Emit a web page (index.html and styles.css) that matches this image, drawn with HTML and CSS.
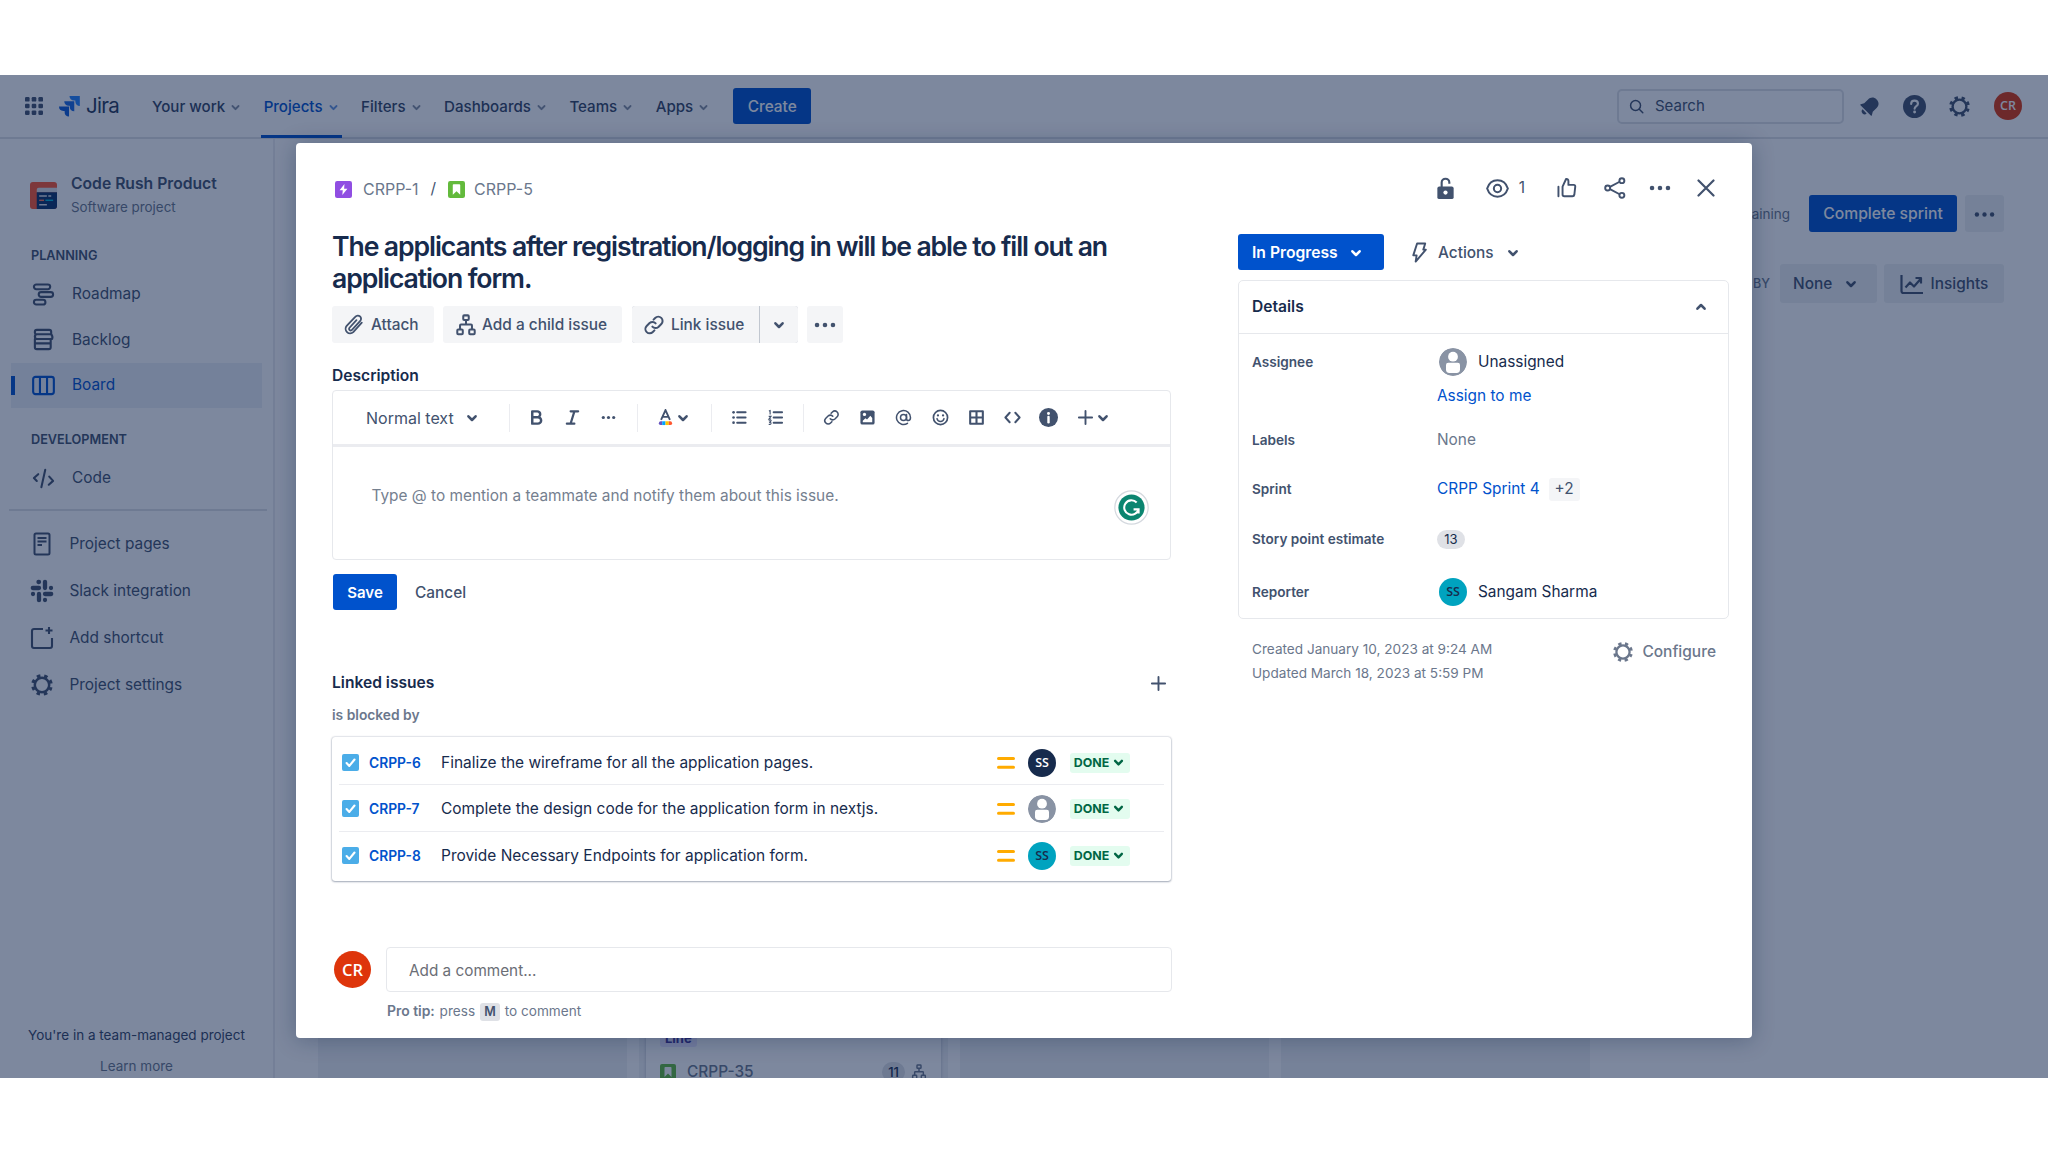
FILE: index.html
```
<!DOCTYPE html>
<html lang="en">
<head>
    <meta charset="UTF-8">
    <meta name="viewport" content="width=device-width, initial-scale=1.0">
    <title>CRPP-5 - Jira</title>
    <link rel="stylesheet" href="styles.css">
</head>
<body>
    <!-- Icon sprite -->
    <svg class="sprite" xmlns="http://www.w3.org/2000/svg">
        <symbol id="chevron" viewBox="0 0 12 12"><path d="M3.300 4.700 6 7.500l2.700-2.800" fill="none" stroke="currentColor" stroke-width="1.900" stroke-linecap="round" stroke-linejoin="round"/></symbol>
        <symbol id="gear" viewBox="0 0 24 24"><g fill="none" stroke="currentColor"><circle cx="12" cy="12" r="7.200" stroke-width="2.500"/><circle cx="12" cy="12" r="9.300" stroke-width="3" stroke-dasharray="3.600 3.704" stroke-dashoffset="1.800" transform="rotate(22.500 12 12)"/></g></symbol>
        <symbol id="more" viewBox="0 0 24 24"><g fill="currentColor"><circle cx="3.300" cy="12" r="2.500"/><circle cx="12" cy="12" r="2.500"/><circle cx="20.700" cy="12" r="2.500"/></g></symbol>
        <symbol id="link" viewBox="0 0 24 24"><g fill="none" stroke="currentColor" stroke-width="2.200" stroke-linecap="round" stroke-linejoin="round"><path d="M10.200 13.800a4.600 4.600 0 0 0 6.600.3l3.200-3.200a4.700 4.700 0 0 0-6.700-6.600l-1.800 1.800"/><path d="M13.800 10.200a4.600 4.600 0 0 0-6.600-.3L4 13.100a4.700 4.700 0 0 0 6.700 6.600l1.800-1.800"/></g></symbol>
        <symbol id="tree" viewBox="0 0 24 24"><g fill="none" stroke="currentColor" stroke-width="2.200" stroke-linejoin="round"><rect x="9" y="1.500" width="6" height="5" rx="1"/><rect x="2.500" y="17" width="6" height="5" rx="1"/><rect x="15.500" y="17" width="6" height="5" rx="1"/><path d="M12 6.500v5M5.500 17v-4.500q0-1 1-1h11q1 0 1 1V17"/></g></symbol>
        <symbol id="story" viewBox="0 0 16 16"><rect width="16" height="16" rx="2" fill="#63BA3C"/><path d="M4.500 3.800q0-.8.8-.8h5.400q.8 0 .8.8V13L8 9.600 4.500 13z" fill="#fff"/></symbol>
        <symbol id="task" viewBox="0 0 16 16"><rect width="16" height="16" rx="1.800" fill="#4BADE8"/><path d="M4.300 8.500l2.600 2.700 4.900-6" fill="none" stroke="#fff" stroke-width="2" stroke-linecap="round" stroke-linejoin="round"/></symbol>
        <symbol id="medium" viewBox="0 0 18 16"><path d="M1.500 3.500h15M1.500 12.300h15" stroke="#FFAB00" stroke-width="3" stroke-linecap="round"/></symbol>
        <symbol id="person" viewBox="0 0 28 28"><circle cx="14" cy="14" r="14" fill="#8993A4"/><circle cx="14" cy="8.700" r="4.900" fill="#fff"/><path d="M7 17q0-2.300 2.300-2.300h9.400q2.300 0 2.300 2.300v4.600q0 3.400-3.400 3.400h-7.200Q7 25 7 21.600z" fill="#fff"/></symbol>
        <symbol id="plus" viewBox="0 0 18 18"><path d="M9 2v14M2 9h14" stroke="currentColor" stroke-width="2" stroke-linecap="round"/></symbol>
    </svg>

    <div class="app">
        <header class="topnav">
            <svg class="switcher" viewBox="0 0 18 18"><g fill="currentColor"><rect width="4.600" height="4.600" rx="1.200"/><rect x="6.700" width="4.600" height="4.600" rx="1.200"/><rect x="13.400" width="4.600" height="4.600" rx="1.200"/><rect y="6.700" width="4.600" height="4.600" rx="1.200"/><rect x="6.700" y="6.700" width="4.600" height="4.600" rx="1.200"/><rect x="13.400" y="6.700" width="4.600" height="4.600" rx="1.200"/><rect y="13.400" width="4.600" height="4.600" rx="1.200"/><rect x="6.700" y="13.400" width="4.600" height="4.600" rx="1.200"/><rect x="13.400" y="13.400" width="4.600" height="4.600" rx="1.200"/></g></svg>
            <a class="brand" href="#">
                <svg viewBox="0 0 22 22"><path d="M0 11h10.500v10.500a4.800 4.800 0 0 1-4.600-4.800v-1.100H4.600A4.700 4.700 0 0 1 0 11z" fill="#0E5BD8"/><path d="M5.500 5.500H16V16a4.800 4.800 0 0 1-4.700-4.700v-1.100h-1.200a4.700 4.700 0 0 1-4.600-4.700z" fill="#1868E3"/><path d="M11 0h10.800v10.600a4.800 4.800 0 0 1-4.700-4.800V4.700h-1.400A4.700 4.700 0 0 1 11 0z" fill="#2684FF"/></svg>
                <span>Jira</span>
            </a>
            <nav class="menu">
                <a href="#">Your work<svg><use href="#chevron"/></svg></a>
                <a href="#" class="active">Projects<svg><use href="#chevron"/></svg></a>
                <a href="#">Filters<svg><use href="#chevron"/></svg></a>
                <a href="#">Dashboards<svg><use href="#chevron"/></svg></a>
                <a href="#">Teams<svg><use href="#chevron"/></svg></a>
                <a href="#">Apps<svg><use href="#chevron"/></svg></a>
            </nav>
            <button class="btn primary create">Create</button>
            <div class="search">
                <svg viewBox="0 0 16 16"><g fill="none" stroke="currentColor" stroke-width="1.600" stroke-linecap="round"><circle cx="7" cy="7" r="5.300"/><path d="M11 11l3.700 3.700"/></g></svg>
                <span>Search</span>
            </div>
            <div class="nav-icons">
                <svg viewBox="0 0 24 24"><g transform="rotate(45 12 12)" fill="currentColor"><path d="M12 1.500c4 0 6.300 2.600 6.300 6.300v5.700l1.900 3.200q.5 1-.6 1H4.400q-1.100 0-.6-1l1.900-3.200V7.800C5.700 4.100 8 1.500 12 1.500z"/><path d="M9 19.200h6a3 3 0 0 1-6 0z"/></g></svg>
                <svg viewBox="0 0 24 24"><circle cx="12" cy="12" r="12" fill="currentColor"/><path d="M8.500 9.300c0-2 1.500-3.400 3.500-3.400s3.600 1.300 3.600 3.200c0 2.500-3.500 2.600-3.500 5.300" fill="none" stroke="#fff" stroke-width="2.200" stroke-linecap="round"/><circle cx="12.100" cy="17.800" r="1.500" fill="#fff"/></svg>
                <svg><use href="#gear"/></svg>
                <span class="avatar red">CR</span>
            </div>
        </header>

        <div class="page">
            <aside class="sidebar">
                <div class="project">
                    <svg viewBox="0 0 28 28"><rect width="28" height="28" rx="3" fill="#FF5630"/><path d="M7 8q0-2 2-2h19v5H7z" fill="#DFE1E6"/><path d="M7 10.500h21V25q0 3-3 3H7z" fill="#0B3268"/><path d="M9.500 14.500h8M9.500 23.500h8M19 14.500h3" stroke="#DFE1E6" stroke-width="1.500"/><path d="M9.500 19h5" stroke="#FF7452" stroke-width="1.500"/><path d="M16 19h8" stroke="#00B8D9" stroke-width="1.500"/></svg>
                    <div>
                        <div class="project-name">Code Rush Product</div>
                        <div class="project-type">Software project</div>
                    </div>
                </div>
                <h2>Planning</h2>
                <a href="#" class="item"><svg viewBox="0 0 24 24"><g fill="none" stroke="currentColor" stroke-width="2.200"><rect x="2" y="1.500" width="17" height="5" rx="2.500"/><rect x="7" y="9.500" width="15" height="5" rx="2.500"/><rect x="2" y="17.500" width="12" height="5" rx="2.500"/></g></svg>Roadmap</a>
                <a href="#" class="item"><svg viewBox="0 0 24 24"><g fill="none" stroke="currentColor" stroke-width="2.200" stroke-linejoin="round"><path d="M4 6.500h16V4q0-2-2-2H5Q3 2 3 4v1q0 1.500 1.500 1.500M4 11.500h17q1-3-1-5M4 6.500q-2 2.500 0 5M3 11.500h16.500V16H3zM3 16h16.500v4q0 2-2 2H5q-2 0-2-2z"/></g></svg>Backlog</a>
                <a href="#" class="item active"><svg viewBox="0 0 24 24"><g fill="none" stroke="currentColor" stroke-width="2.200"><rect x="1.200" y="3" width="21.600" height="18" rx="2.500"/><path d="M8.300 3v18M15.700 3v18"/></g></svg>Board</a>
                <h2 class="dev">Development</h2>
                <a href="#" class="item code"><svg viewBox="0 0 24 24"><path d="M6.500 7.500 2 11.500l3 3M13.800 3l-4 18M18 10l4 4.500-4.500 4" fill="none" stroke="currentColor" stroke-width="2.200" stroke-linecap="round" stroke-linejoin="round"/></svg>Code</a>
                <hr>
                <div class="tools">
                    <a href="#"><svg viewBox="0 0 24 24"><g fill="none" stroke="currentColor" stroke-width="2"><rect x="4.500" y="1.500" width="15" height="21" rx="1.500"/><path d="M7.500 6h9M7.500 9.500h9M7.500 13h4.500"/></g></svg>Project pages</a>
                    <a href="#"><svg viewBox="0 0 24 24"><g stroke="currentColor" stroke-width="4.300" stroke-linecap="round"><path d="M9 9H2.800M15 9V2.800M15 15h6.200M9 15v6.200M9 3v.01M8.500 3H9M21 9v.01M15 21v.01M3 15v.01"/></g></svg>Slack integration</a>
                    <a href="#"><svg viewBox="0 0 24 24"><path d="M13 3H4q-2 0-2 2v15q0 2 2 2h16q2 0 2-2v-8M19 1v7M15.500 4.500h7" fill="none" stroke="currentColor" stroke-width="2.100"/></svg>Add shortcut</a>
                    <a href="#"><svg><use href="#gear"/></svg>Project settings</a>
                </div>
                <div class="team-note">You're in a team-managed project<a href="#">Learn more</a></div>
            </aside>

            <main class="board">
                <div class="board-bar">
                    <span class="remaining">0 days remaining</span>
                    <button class="btn primary">Complete sprint</button>
                    <button class="btn subtle dots"><svg><use href="#more"/></svg></button>
                </div>
                <div class="board-filters">
                    <span>GROUP BY</span>
                    <button class="btn subtle none">None<svg class="chev"><use href="#chevron"/></svg></button>
                    <button class="btn subtle insights"><svg viewBox="0 0 24 24"><path d="M1.500 3v16q0 2 2 2H23M5.500 15.500l4.500-5 4 4 7-8M15.500 6H21v5.500" fill="none" stroke="currentColor" stroke-width="2.200" stroke-linejoin="round"/></svg>Insights</button>
                </div>
                <div class="columns">
                    <div class="column"></div>
                    <div class="column">
                        <div class="card">
                            <span class="epic">Line</span>
                            <div class="card-row"><svg class="type"><use href="#story"/></svg><span>CRPP-35</span><b>11</b><svg class="sub"><use href="#tree"/></svg></div>
                        </div>
                    </div>
                    <div class="column"></div>
                    <div class="column"></div>
                </div>
            </main>
        </div>

        <div class="blanket"></div>

        <!-- Issue dialog -->
        <section class="modal">
            <div class="content">
                <div class="crumbs">
                    <svg viewBox="0 0 16 16"><rect width="16" height="16" rx="2" fill="#904EE2"/><path d="M8.900 2.800 4.300 8.600h3L6.900 13.200l4.800-5.900H8.600z" fill="#fff"/></svg>
                    <a href="#">CRPP-1</a>
                    <i>/</i>
                    <svg><use href="#story"/></svg>
                    <a href="#">CRPP-5</a>
                </div>
                <h1>The applicants after registration/logging in will be able to fill out an application form.</h1>
                <div class="quick">
                    <button class="btn attach"><svg viewBox="0 0 24 24"><path d="M20.500 9.500l-9.300 10.300a5 5 0 0 1-7.200-6.900L13.600 2.900a3.500 3.500 0 0 1 5.200 4.700l-9 9.800a1.800 1.800 0 0 1-2.700-2.400l7.600-8.200" fill="none" stroke="currentColor" stroke-width="2" stroke-linecap="round" stroke-linejoin="round"/></svg>Attach</button>
                    <button class="btn child"><svg><use href="#tree"/></svg>Add a child issue</button>
                    <div class="split">
                        <button class="btn"><svg><use href="#link"/></svg>Link issue</button>
                        <button class="btn drop"><svg class="chev"><use href="#chevron"/></svg></button>
                    </div>
                    <button class="btn dots"><svg><use href="#more"/></svg></button>
                </div>

                <h3 class="desc-title">Description</h3>
                <div class="editor">
                    <div class="toolbar">
                        <div class="style">Normal text<svg class="chev"><use href="#chevron"/></svg></div>
                        <div class="group">
                            <span><svg viewBox="0 0 18 18"><path d="M4.500 2.500h5.300a3.100 3.100 0 0 1 0 6.200H4.500zM4.500 8.700h6a3.400 3.400 0 0 1 0 6.800h-6z" fill="none" stroke="currentColor" stroke-width="2.600" stroke-linejoin="round"/></svg></span>
                            <span><svg viewBox="0 0 18 18"><path d="M7 2.500h8M3 15.500h8M11 2.500 7 15.500" fill="none" stroke="currentColor" stroke-width="2.300" stroke-linecap="round"/></svg></span>
                            <span><svg viewBox="0 0 18 18"><g fill="currentColor"><circle cx="3.500" cy="9" r="1.700"/><circle cx="9" cy="9" r="1.700"/><circle cx="14.500" cy="9" r="1.700"/></g></svg></span>
                        </div>
                        <div class="group color">
                            <svg viewBox="0 0 18 18"><path d="M4.300 11.500 9 1.200l4.700 10.300M5.800 8.300h6.400" fill="none" stroke="currentColor" stroke-width="2"/><path d="M2 15a2 2 0 0 1 2-2h1.500v4H4a2 2 0 0 1-2-2z" fill="#6554C0"/><path d="M5.500 13H9v4H5.500z" fill="#00A3FF"/><path d="M9 13h3.500v4H9z" fill="#FFC400"/><path d="M12.500 13H14a2 2 0 0 1 0 4h-1.500z" fill="#FF5630"/></svg>
                            <svg class="chev"><use href="#chevron"/></svg>
                        </div>
                        <div class="group lists">
                            <span><svg viewBox="0 0 18 18"><path d="M6.500 3.500h9M6.500 9h9M6.500 14.500h9" stroke="currentColor" stroke-width="2" stroke-linecap="round"/><g fill="currentColor"><circle cx="2.700" cy="3.500" r="1.400"/><circle cx="2.700" cy="9" r="1.400"/><circle cx="2.700" cy="14.500" r="1.400"/></g></svg></span>
                            <span><svg viewBox="0 0 18 18"><path d="M7 3.500h9M7 9h9M7 14.500h9" stroke="currentColor" stroke-width="2" stroke-linecap="round"/><path d="M2 2.200l1.300-.5v4M1.800 7.800h2.400L2 10.700h2.400M1.800 12.500h2.400l-1.200 1.600q1.500.2 1.200 1.400-.6 1.200-2.400.6" fill="none" stroke="currentColor" stroke-width="1.200"/></svg></span>
                        </div>
                        <div class="group last">
                            <span><svg><use href="#link"/></svg></span>
                            <span><svg viewBox="0 0 18 18"><rect x="1.500" y="1.500" width="15" height="15" rx="2" fill="currentColor"/><circle cx="5.800" cy="5.800" r="1.700" fill="#fff"/><path d="M4 14v-1.500l2.800-2.800 1.700 1.500 3.500-4L14 9.500V14z" fill="#fff"/></svg></span>
                            <span><svg viewBox="0 0 18 18"><g fill="none" stroke="currentColor" stroke-width="1.600" stroke-linecap="round"><circle cx="9" cy="9" r="3.200"/><path d="M12.200 5.800v4.400q0 2 1.900 2 2.300 0 2.300-3.200a7.400 7.400 0 1 0-3.200 6.100"/></g></svg></span>
                            <span><svg viewBox="0 0 18 18"><circle cx="9" cy="9" r="7.500" fill="none" stroke="currentColor" stroke-width="1.800"/><circle cx="6.300" cy="6.800" r="1.200" fill="currentColor"/><circle cx="11.700" cy="6.800" r="1.200" fill="currentColor"/><path d="M5.300 10.200a3.800 3.800 0 0 0 7.400 0" fill="none" stroke="currentColor" stroke-width="1.600" stroke-linecap="round"/></svg></span>
                            <span><svg viewBox="0 0 18 18"><path d="M2.300 2.300h13.400v13.400H2.300zM9 2.300v13.400M2.300 9h13.400" fill="none" stroke="currentColor" stroke-width="2.200" stroke-linejoin="round"/></svg></span>
                            <span><svg viewBox="0 0 18 18"><path d="M6 4 1.500 9 6 14M12 4l4.500 5-4.500 5" fill="none" stroke="currentColor" stroke-width="2.100" stroke-linecap="round" stroke-linejoin="round"/></svg></span>
                            <span><svg class="info" viewBox="0 0 18 18"><circle cx="9" cy="9" r="9" fill="currentColor"/><circle cx="9" cy="5.300" r="1.400" fill="#fff"/><path d="M9 8.500v5" stroke="#fff" stroke-width="2.300" stroke-linecap="round"/></svg></span>
                            <span><svg><use href="#plus"/></svg></span>
                            <svg class="chev"><use href="#chevron"/></svg>
                        </div>
                    </div>
                    <div class="editor-body">
                        <p>Type @ to mention a teammate and notify them about this issue.</p>
                        <svg class="grammar" viewBox="0 0 34 34"><circle cx="17" cy="17" r="16.200" fill="#fff" stroke="#D5D9DF" stroke-width="1.200"/><circle cx="17" cy="17" r="12.700" fill="#0B8570"/><path d="M22 12.200a7 7 0 1 0 1.900 5.600M19 18.800h4.900v4" fill="none" stroke="#fff" stroke-width="2"/></svg>
                    </div>
                </div>
                <div class="save-row">
                    <button class="btn primary">Save</button>
                    <button class="btn plain">Cancel</button>
                </div>

                <div class="linked-head">
                    <h3>Linked issues</h3>
                    <svg><use href="#plus"/></svg>
                </div>
                <h4>is blocked by</h4>
                <ul class="linked">
                    <li>
                        <svg class="type"><use href="#task"/></svg><a href="#">CRPP-6</a>
                        <span class="summary">Finalize the wireframe for all the application pages.</span>
                        <svg class="prio"><use href="#medium"/></svg>
                        <span class="avatar navy">SS</span>
                        <span class="done">DONE<svg><use href="#chevron"/></svg></span>
                    </li>
                    <li>
                        <svg class="type"><use href="#task"/></svg><a href="#">CRPP-7</a>
                        <span class="summary">Complete the design code for the application form in nextjs.</span>
                        <svg class="prio"><use href="#medium"/></svg>
                        <svg class="avatar"><use href="#person"/></svg>
                        <span class="done">DONE<svg><use href="#chevron"/></svg></span>
                    </li>
                    <li>
                        <svg class="type"><use href="#task"/></svg><a href="#">CRPP-8</a>
                        <span class="summary">Provide Necessary Endpoints for application form.</span>
                        <svg class="prio"><use href="#medium"/></svg>
                        <span class="avatar teal">SS</span>
                        <span class="done">DONE<svg><use href="#chevron"/></svg></span>
                    </li>
                </ul>

                <div class="comment">
                    <span class="avatar red big">CR</span>
                    <div class="comment-box">Add a comment...</div>
                </div>
                <p class="tip"><b>Pro tip:</b> press <kbd>M</kbd> to comment</p>
            </div>

            <div class="side">
                <div class="actions">
                    <svg class="lock" viewBox="0 0 24 24"><rect x="3.500" y="10" width="17" height="13" rx="2" fill="currentColor"/><path d="M8 10.500V5.800a4 4 0 0 1 8 0V7" fill="none" stroke="currentColor" stroke-width="2.200"/><circle cx="12" cy="16.300" r="2.200" fill="#fff"/></svg>
                    <svg class="eye" viewBox="0 0 24 24"><g fill="none" stroke="currentColor" stroke-width="2.100"><path d="M1.200 12C3 6.500 7 3.500 12 3.500S21 6.500 22.800 12C21 17.500 17 20.500 12 20.500S3 17.500 1.200 12z"/><circle cx="12" cy="12" r="3.800"/></g></svg>
                    <span class="watchers">1</span>
                    <svg class="thumb" viewBox="0 0 24 24"><path d="M7.500 11l4-8.700q2.700-.3 2.700 2.500V9h6q2 0 1.800 2l-1 9q-.3 2-2.200 2H9.500q-2 0-2-2zM2.800 11v11" fill="none" stroke="currentColor" stroke-width="2.200" stroke-linejoin="round" stroke-linecap="round"/></svg>
                    <svg class="share" viewBox="0 0 24 24"><g fill="none" stroke="currentColor" stroke-width="2.100"><circle cx="4" cy="12" r="2.700"/><circle cx="19.500" cy="4" r="2.700"/><circle cx="19.500" cy="20" r="2.700"/><path d="M6.500 10.700 17 5.200M6.500 13.300 17 18.800"/></g></svg>
                    <svg class="more"><use href="#more"/></svg>
                    <svg class="close" viewBox="0 0 18 18"><path d="M1.500 1.500l15 15M16.500 1.500l-15 15" stroke="currentColor" stroke-width="2.200" stroke-linecap="round"/></svg>
                </div>
                <div class="status-row">
                    <button class="btn primary status">In Progress<svg class="chev"><use href="#chevron"/></svg></button>
                    <button class="btn plain automation"><svg viewBox="0 0 18 22"><path d="M7 1.500h8.500L13.500 8h2.700L5.500 20.500 6.500 14H3z" fill="none" stroke="currentColor" stroke-width="2" stroke-linejoin="round"/></svg>Actions<svg class="chev"><use href="#chevron"/></svg></button>
                </div>
                <div class="details">
                    <div class="details-head">Details<svg class="chev up"><use href="#chevron"/></svg></div>
                    <dl>
                        <dt>Assignee</dt>
                        <dd class="person"><svg class="avatar"><use href="#person"/></svg>Unassigned</dd>
                        <dd class="assign"><a href="#">Assign to me</a></dd>
                        <dt>Labels</dt>
                        <dd class="muted">None</dd>
                        <dt>Sprint</dt>
                        <dd><a href="#">CRPP Sprint 4</a><span class="extra">+2</span></dd>
                        <dt>Story point estimate</dt>
                        <dd><span class="points">13</span></dd>
                        <dt>Reporter</dt>
                        <dd class="person"><span class="avatar teal">SS</span>Sangam Sharma</dd>
                    </dl>
                </div>
                <div class="meta">
                    <div>Created January 10, 2023 at 9:24 AM<br>Updated March 18, 2023 at 5:59 PM</div>
                    <a href="#"><svg><use href="#gear"/></svg>Configure</a>
                </div>
            </div>
        </section>
    </div>
</body>
</html>
```
FILE: styles.css
```
:root {
    --text: #172B4D;
    --subtle: #42526E;
    --muted: #6B778C;
    --blue: #0052CC;
    --line: #EBECF0;
}
* {
    box-sizing: border-box;
    margin: 0;
    padding: 0;
}
body {
    background: #fff;
    color: var(--text);
    font-family: Inter, "Liberation Sans", sans-serif;
    font-size: 15.4px;
    line-height: 20px;
    overflow: hidden;
}
a {
    color: var(--blue);
    text-decoration: none;
}
svg {
    display: block;
    flex: none;
}
ul {
    list-style: none;
}
.sprite {
    position: absolute;
    width: 0;
    height: 0;
}
.app {
    position: relative;
    height: 1002.5px;
    margin-top: 75px;
    overflow: hidden;
}
.blanket {
    position: absolute;
    inset: 0;
    background: rgba(9, 30, 72, 0.53);
}

/* Buttons and avatars */
.btn {
    display: flex;
    align-items: center;
    height: 37px;
    padding-top: 1px;
    border: none;
    border-radius: 3px;
    background: #F4F5F7;
    color: var(--subtle);
    font: 500 15.4px/20px Inter, "Liberation Sans", sans-serif;
    white-space: nowrap;
}
.btn.primary {
    background: var(--blue);
    color: #fff;
}
.btn.plain {
    background: none;
}
.chev {
    width: 16px;
    height: 16px;
}
.up {
    transform: rotate(180deg);
}
.avatar {
    display: flex;
    flex: none;
    align-items: center;
    justify-content: center;
    width: 28px;
    height: 28px;
    border-radius: 50%;
    color: #fff;
    font-family: "Open Sans", sans-serif;
    font-size: 12.5px;
    font-weight: 600;
}
.avatar.red { background: #DE350B; }
.avatar.navy { background: #172B4D; }
.avatar.teal { background: #00A3BF; color: #172B4D; }
.avatar.big {
    width: 37px;
    height: 37px;
    font-size: 16.5px;
}

/* Top navigation */
.topnav {
    display: flex;
    align-items: center;
    height: 64px;
    padding: 0 26px 0 25px;
    border-bottom: 2px solid #DFE1E6;
    color: var(--subtle);
}
.switcher {
    width: 18px;
    height: 18px;
}
.brand {
    display: flex;
    align-items: center;
    width: 75px;
    margin-left: 16px;
    color: #253858;
    font-size: 20.5px;
    letter-spacing: -0.7px;
}
.brand svg {
    width: 21px;
    height: 21px;
    margin-right: 6px;
}
.menu {
    display: flex;
    align-self: stretch;
    gap: 16.5px;
    margin: 0 0 -1px 15px;
}
.menu a {
    display: flex;
    align-items: center;
    padding: 4px 3px 0;
    border-bottom: 3px solid transparent;
    color: #344563;
    font-size: 15.1px;
    font-weight: 500;
}
.menu svg {
    width: 13px;
    height: 13px;
    margin: 1px -1px 0 4px;
    opacity: 0.6;
}
.menu a.active {
    border-color: var(--blue);
    color: var(--blue);
}
.create {
    width: 78px;
    height: 36px;
    margin-left: 21px;
    justify-content: center;
}
.search {
    display: flex;
    align-items: center;
    gap: 11px;
    width: 227px;
    height: 35px;
    margin-left: auto;
    padding-left: 10px;
    border: 2px solid #DFE1E6;
    border-radius: 5px;
    font-size: 15px;
}
.search svg {
    width: 15px;
    height: 15px;
}
.nav-icons {
    display: flex;
    align-items: center;
    gap: 22px;
    margin-left: 14px;
}
.nav-icons svg {
    width: 23px;
    height: 23px;
}
.nav-icons .avatar {
    margin-left: 1px;
}

/* Sidebar */
.page {
    display: flex;
    height: 940px;
}
.sidebar {
    display: flex;
    flex-direction: column;
    width: 275px;
    flex: none;
    border-right: 2px solid #EBECF0;
    color: var(--subtle);
}
.project {
    display: flex;
    align-items: center;
    gap: 14px;
    margin: 33px 0 0 30px;
}
.project svg {
    width: 27px;
    height: 27px;
}
.project-name {
    font-size: 15.7px;
    font-weight: 600;
    line-height: 24px;
}
.project-type {
    color: var(--muted);
    font-size: 13.4px;
    line-height: 22px;
}
.sidebar h2 {
    margin: 30px 0 0 31px;
    font-size: 12.7px;
    font-weight: 600;
    line-height: 16px;
    text-transform: uppercase;
}
.sidebar a {
    color: inherit;
}
.sidebar .item {
    display: flex;
    align-items: center;
    gap: 17px;
    height: 45.5px;
    margin: 0 11px;
    padding-left: 21px;
}
.sidebar h2 + .item {
    margin-top: 7.5px;
}
.item svg {
    width: 23px;
    height: 23px;
}
.sidebar .item.active {
    border-left: 4px solid var(--blue);
    border-image: linear-gradient(transparent 30%, var(--blue) 30%, var(--blue) 70%, transparent 70%) 1;
    padding-left: 17px;
    background: #EBF0F7;
    color: var(--blue);
}
.sidebar h2.dev {
    margin-top: 23.5px;
}
.sidebar h2 + .item.code {
    margin-top: 8px;
}
.sidebar hr {
    margin: 8px 6px 0 9px;
    border: none;
    border-top: 2px solid #DFE1E6;
}
.tools {
    display: flex;
    flex-direction: column;
    margin: 9px 0 0 30px;
}
.tools a {
    display: flex;
    align-items: center;
    gap: 15.5px;
    height: 47px;
}
.tools svg {
    width: 24px;
    height: 24px;
}
.team-note {
    display: flex;
    flex-direction: column;
    gap: 10.5px;
    margin-top: 317px;
    color: #344563;
    font-size: 13.5px;
    text-align: center;
}
.team-note a {
    color: var(--muted);
}

/* Board behind the dialog */
.board {
    display: flex;
    flex: 1;
    flex-direction: column;
    padding: 56px 44px 0 43px;
}
.board-bar,
.board-filters {
    display: flex;
    align-items: center;
    justify-content: flex-end;
}
.remaining {
    margin-right: 19px;
    color: var(--muted);
    font-size: 13.5px;
}
.board-bar .primary {
    width: 148px;
    justify-content: center;
    font-size: 15.7px;
}
.board .subtle {
    background: #EFF1F3;
}
.dots {
    width: 36px;
    justify-content: center;
}
.dots svg {
    width: 21px;
    height: 21px;
}
.board-bar .dots {
    width: 39px;
    margin-left: 8px;
}
.board-filters {
    margin-top: 32px;
    color: var(--muted);
    font-size: 12.5px;
    font-weight: 500;
}
.board-filters .btn {
    height: 39px;
}
.board-filters .none {
    width: 97px;
    margin: 0 7px 0 10px;
    padding-left: 13px;
    gap: 11px;
}
.insights {
    width: 120px;
    justify-content: center;
    gap: 7px;
}
.insights svg {
    width: 24px;
    height: 24px;
}
.columns {
    display: flex;
    flex: 1;
    gap: 12px;
    margin-top: 30px;
}
.column {
    display: flex;
    flex-direction: column;
    justify-content: flex-end;
    width: 309px;
    padding: 0 7px;
    background: #F1F2F5;
}
.card {
    height: 119px;
    padding: 68px 14px 0;
    background: #fff;
    box-shadow: 0 0 3px rgba(9, 30, 66, 0.25);
}
.epic {
    display: inline-block;
    padding: 0 5px;
    border-radius: 3px;
    background: #EAE6FF;
    color: #403294;
    font-size: 13px;
    font-weight: 700;
    line-height: 17px;
}
.card-row {
    display: flex;
    align-items: center;
    margin-top: 14px;
    color: var(--muted);
    font-weight: 500;
}
.card-row .type {
    width: 16px;
    height: 16px;
    margin-right: 11px;
}
.card-row b {
    margin-left: auto;
    padding: 0 6px;
    border-radius: 10px;
    background: #DFE1E6;
    color: var(--text);
    font-size: 13px;
    font-weight: 500;
}
.sub {
    width: 16px;
    height: 16px;
    margin-left: 6px;
}

/* Issue dialog */
.modal {
    position: absolute;
    top: 68px;
    left: 296px;
    display: flex;
    justify-content: space-between;
    width: 1456px;
    height: 895px;
    padding: 33px 23px 0 36px;
    border-radius: 4px;
    background: #fff;
    box-shadow: 0 2px 22px rgba(9, 30, 66, 0.3);
}
.content {
    width: 839px;
}
.crumbs {
    display: flex;
    align-items: center;
    height: 26px;
    padding-left: 3px;
}
.crumbs svg {
    width: 17px;
    height: 17px;
    margin-right: 11px;
}
.crumbs svg ~ svg {
    margin-right: 9px;
}
.crumbs a {
    color: var(--muted);
    font-size: 16px;
}
.crumbs i {
    margin: 0 12px;
    color: var(--subtle);
    font-style: normal;
}
h1 {
    margin-top: 27.5px;
    font-size: 26.6px;
    font-weight: 600;
    letter-spacing: -1.1px;
    line-height: 32px;
}
.quick {
    display: flex;
    margin-top: 12.5px;
}
.quick svg {
    width: 22px;
    height: 22px;
}
.attach {
    width: 102px;
    margin-right: 9px;
    padding-left: 11px;
    gap: 6px;
}
.child {
    width: 179px;
    margin-right: 10px;
    padding-left: 12px;
    gap: 5px;
}
.split {
    display: flex;
    gap: 1px;
    margin-right: 9px;
    border-radius: 3px;
    background: #C1C7D0;
}
.split .btn {
    width: 127px;
    padding-left: 11px;
    gap: 6px;
    border-radius: 3px 0 0 3px;
}
.split .drop {
    width: 38px;
    border-radius: 0 3px 3px 0;
}
.quick .chev {
    width: 16px;
    height: 16px;
}
h3 {
    font-size: 15.6px;
    font-weight: 600;
}
.desc-title {
    margin-top: 23px;
}
.editor {
    height: 170px;
    margin-top: 4px;
    border: 1.5px solid #E6E8EC;
    border-radius: 4px;
}
.toolbar {
    display: flex;
    align-items: center;
    height: 56px;
    border-bottom: 3px solid #EBECF0;
    color: var(--subtle);
}
.style {
    display: flex;
    align-items: center;
    gap: 10px;
    width: 176px;
    padding-left: 33px;
    font-size: 16px;
}
.group {
    display: flex;
    align-items: center;
    height: 28px;
    padding-left: 8px;
    border-left: 1px solid var(--line);
}
.group span {
    display: flex;
    justify-content: center;
    width: 36.3px;
}
.group svg {
    width: 17px;
    height: 17px;
}
.group .info {
    width: 19px;
    height: 19px;
}
.group:nth-child(2) {
    width: 128px;
}
.group.color {
    width: 74px;
    padding-left: 19px;
    gap: 1px;
}
.group.lists {
    width: 92px;
    padding-left: 9px;
}
.group.last {
    padding-left: 9px;
}
.group .chev {
    width: 16px;
    height: 16px;
}
.last .chev {
    margin-left: -8px;
}
.editor-body {
    display: flex;
    justify-content: space-between;
    padding: 39px 21px 0 38.5px;
    color: #75808F;
}
.grammar {
    width: 35px;
    height: 35px;
    margin-top: 4px;
}
.save-row {
    display: flex;
    gap: 18px;
    margin: 14px 0 0 1px;
}
.save-row .btn {
    height: 36px;
}
.save-row .primary {
    width: 64px;
    justify-content: center;
    font-weight: 600;
    font-size: 15px;
}
.linked-head {
    display: flex;
    align-items: center;
    justify-content: space-between;
    height: 24px;
    margin-top: 61px;
    padding-right: 4px;
}
.linked-head svg {
    width: 17px;
    height: 17px;
    color: var(--subtle);
}
h4 {
    margin-top: 10px;
    color: var(--muted);
    font-size: 13.8px;
    font-weight: 600;
}
.linked {
    height: 144px;
    margin-top: 12px;
    padding: 2px 7px 0;
    border-radius: 3px;
    box-shadow: 0 0 2px rgba(9, 30, 66, 0.35), 0 1px 2px rgba(9, 30, 66, 0.3);
}
.linked li {
    display: flex;
    align-items: center;
    height: 46.3px;
    padding: 2px 34px 0 3px;
    border-bottom: 1px solid var(--line);
}
.linked li:last-child {
    border: none;
}
.linked .type {
    width: 17px;
    height: 17px;
    margin-right: 10px;
}
.linked a {
    width: 72px;
    font-size: 13.8px;
    font-weight: 600;
}
.summary {
    font-size: 15.48px;
}
.prio {
    width: 18px;
    height: 16px;
    margin: 0 13px 0 auto;
}
.done {
    display: flex;
    align-items: center;
    justify-content: center;
    gap: 2px;
    width: 60px;
    height: 20px;
    margin-left: 14px;
    border-radius: 3px;
    background: #E3FCEF;
    color: #006644;
    font-size: 12.4px;
    font-weight: 700;
}
.done svg {
    width: 15px;
    height: 15px;
}
.comment {
    display: flex;
    align-items: center;
    gap: 15px;
    margin: 66px -1px 0 2px;
}
.comment-box {
    flex: 1;
    height: 45px;
    padding-left: 22px;
    border: 1.5px solid #E6E8EC;
    border-radius: 4px;
    color: #6B6E76;
    font-size: 15.3px;
    line-height: 45px;
}
.tip {
    margin: 9px 0 0 55px;
    color: var(--muted);
    font-size: 13.6px;
}
.tip b {
    margin-right: 1px;
    font-size: 13.9px;
    font-weight: 600;
}
kbd {
    display: inline-block;
    width: 20px;
    margin: 0 1px;
    border-radius: 3px;
    background: #DFE1E6;
    color: var(--subtle);
    font: 600 12.5px/18px Inter, sans-serif;
    text-align: center;
}

/* Right column */
.side {
    width: 491px;
}
.actions {
    display: flex;
    align-items: center;
    justify-content: flex-end;
    height: 24px;
    padding-right: 14px;
    color: var(--subtle);
}
.lock {
    width: 23px;
    height: 23px;
    margin-right: 29px;
}
.eye {
    width: 23px;
    height: 23px;
}
.watchers {
    width: 10px;
    margin: 0 29px 0 8px;
    text-align: center;
}
.thumb {
    width: 21px;
    height: 21px;
    margin: -2px 27px 0 0;
}
.share {
    width: 22px;
    height: 22px;
    margin-right: 23px;
}
.more {
    width: 22px;
    height: 22px;
    margin-right: 26px;
}
.close {
    width: 18px;
    height: 18px;
}
.status-row {
    display: flex;
    margin-top: 34px;
}
.status-row .btn {
    height: 36px;
}
.status {
    width: 146px;
    padding-left: 14px;
    gap: 10px;
}
.btn.status {
    font-size: 15.7px;
    font-weight: 600;
}
.automation {
    margin-left: 26px;
}
.automation svg:first-child {
    width: 18px;
    height: 21px;
    margin-right: 10px;
}
.automation .chev {
    margin-left: 11px;
}
.details {
    height: 338.5px;
    margin-top: 10px;
    border: 1.5px solid #E6E8EC;
    border-radius: 5px;
}
.details-head {
    display: flex;
    align-items: center;
    justify-content: space-between;
    height: 53px;
    padding: 0 19px 0 13px;
    border-bottom: 1.5px solid #E6E8EC;
    font-size: 15.6px;
    font-weight: 600;
}
.details-head .chev {
    color: var(--subtle);
}
dl {
    display: grid;
    grid-template-columns: 185px 1fr;
    grid-template-rows: 32px 35px 53px 46px 54px 51px;
    align-items: center;
    padding: 12px 0 0 13px;
}
dt {
    color: var(--subtle);
    font-size: 13.6px;
    font-weight: 600;
}
dd {
    display: flex;
    align-items: center;
}
dd.person {
    gap: 11px;
    padding-left: 2px;
}
.assign {
    grid-column: 2;
}
.muted {
    color: var(--muted);
}
.extra {
    margin-left: 9px;
    padding: 1px 6px 2px;
    border-radius: 3px;
    background: #F4F5F7;
    color: var(--subtle);
}
.points {
    width: 28px;
    border-radius: 10px;
    background: #DFE1E6;
    font-size: 13px;
    line-height: 19px;
    text-align: center;
}
.meta {
    display: flex;
    align-items: flex-start;
    justify-content: space-between;
    margin-top: 18px;
    padding: 0 13px 0 14px;
    color: var(--muted);
    font-size: 13.6px;
    line-height: 24.5px;
}
.meta a {
    display: flex;
    align-items: center;
    gap: 8px;
    margin-top: 3px;
    color: var(--muted);
    font-size: 15.5px;
    font-weight: 500;
}
.meta svg {
    width: 22px;
    height: 22px;
}
```
